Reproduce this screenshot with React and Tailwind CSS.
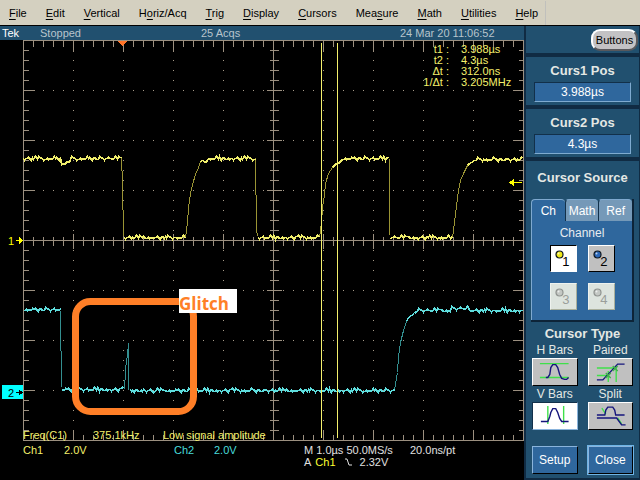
import React, { useState } from 'react';
import { clsx } from 'clsx';

const MENU = [
  ['', 'F', 'ile'],
  ['', 'E', 'dit'],
  ['', 'V', 'ertical'],
  ['H', 'o', 'riz/Acq'],
  ['', 'T', 'rig'],
  ['', 'D', 'isplay'],
  ['', 'C', 'ursors'],
  ['Mea', 's', 'ure'],
  ['', 'M', 'ath'],
  ['', 'U', 'tilities'],
  ['', 'H', 'elp'],
];

const READOUTS = [
  ['t1 :', '3.988µs'],
  ['t2 :', '4.3µs'],
  ['Δt :', '312.0ns'],
  ['1/Δt :', '3.205MHz'],
];

// graticule: 10 x 8 divisions of 50 units, origin at (23, 40)
const LEFT = 23;
const TOP = 40;
const RIGHT = 523;
const BOTTOM = 440;
const MID_X = 273;
const MID_Y = 240;

const NOISE = [0, 1, -1, 0, 1, 1, -1, 0, -2, 0, 1, -1, 1, 0, -1, 2, 0, 0, -1, 1, 0, -1, 1, 2, 0, -1, 0, 1, -2];

const flat = (from, to, y, seed) => {
  const points = [];
  for (let x = from; x <= to; x += 1) {
    points.push(`${x},${y + NOISE[(x * 3 + seed * 7 + Math.floor(x / 11)) % NOISE.length]}`);
  }
  return points.join(' ');
};

const CH1_BRIGHT = [
  flat(23, 60, 158, 1) + ' 61,164 62,163 64,164 67,161 69,162 ' + flat(70, 121, 158, 3),
  flat(123, 185, 237, 2),
  '200,161 202,160 205,162 207,160 ' + flat(208, 255, 158, 4),
  flat(257, 319, 237, 5),
  '332,167 334,165 336,163 338,163 340,161 ' + flat(342, 388, 158, 2),
  flat(390, 452, 237, 1),
  '467,165 469,163 471,162 474,160 ' + flat(476, 522, 159, 6),
];

const CH1_DIM = [
  '121,158 122,182 123,236',
  '185,237 187,222 188,207 190,193 192,184 195,174 198,167 200,161',
  '255,158 256,229 257,236',
  '319,237 321,222 322,207 324,194 325,183 328,173 332,167',
  '389,158 389,234',
  '452,237 454,222 456,206 458,190 460,180 464,171 467,165',
];

const CH2_BRIGHT = [
  flat(23, 60, 309, 2),
  flat(62, 123, 389, 4),
  flat(130, 394, 390, 1),
  '406,321 408,317 411,315 414,313 ' + flat(416, 450, 310, 3) + ' ' + flat(451, 468, 308, 5) + ' ' + flat(469, 522, 310, 2),
];

const CH2_DIM = [
  '60,311 61,387',
  '124,389 125,370 126,360 127,355 128,343 128,389',
  '394,390 397,372 398,356 400,342 403,330 406,321',
];

const Graticule = () => {
  const lines = [];
  const dots = [];
  for (let x = LEFT + 10; x < RIGHT; x += 10) {
    const big = (x - LEFT) % 50 === 0;
    lines.push(`M${x} ${TOP}v${big ? 11 : 6}`);
    lines.push(`M${x} ${BOTTOM}v${big ? -11 : -6}`);
    lines.push(big ? `M${x} ${MID_Y - 7}v15` : `M${x} ${MID_Y - 4}v9`);
  }
  for (let y = TOP + 10; y < BOTTOM; y += 10) {
    const big = (y - TOP) % 50 === 0;
    lines.push(`M${LEFT} ${y}h${big ? 11 : 5}`);
    lines.push(`M${RIGHT} ${y}h${big ? -11 : -5}`);
    lines.push(big ? `M${MID_X - 7} ${y}h15` : `M${MID_X - 4} ${y}h9`);
  }
  for (let x = LEFT + 10; x < RIGHT; x += 10) {
    for (let y = TOP + 10; y < BOTTOM; y += 10) {
      if ((x - LEFT) % 50 === 0 || (y - TOP) % 50 === 0) dots.push(`M${x} ${y}h1v1h-1z`);
    }
  }
  return (
    <>
      <path d={dots.join('')} fill="#a89c8a" />
      <g fill="none" stroke="#9c9080" strokeWidth="1">
        <path d={lines.join('')} transform="translate(.5 .5)" />
        <path d={`M${LEFT}.5 ${TOP}.5H${RIGHT}.5V${BOTTOM}.5H${LEFT}.5z`} />
        <path d={`M${LEFT} ${MID_Y}.5H${RIGHT}M${MID_X}.5 ${TOP}V${BOTTOM}`} />
      </g>
    </>
  );
};

const Trace = ({ lines, color, width = 1 }) => (
  <g fill="none" stroke={color} strokeWidth={width}>
    {lines.map((points, i) => (
      <polyline key={i} points={points} transform="translate(.5 .5)" />
    ))}
  </g>
);

const Plot = () => (
  <svg viewBox="0 40 524 402" className="block w-full h-auto" shapeRendering="crispEdges" role="img" aria-label="Channel 1 and channel 2 waveforms">
    <Graticule />
    <Trace lines={CH1_DIM} color="#9a9434" />
    <Trace lines={CH1_BRIGHT} color="#f0ee6c" width={1.5} />
    <Trace lines={CH2_DIM} color="#338f90" />
    <Trace lines={CH2_BRIGHT} color="#5fdede" width={1.5} />

    {/* cursors */}
    <path d="M321.5 43V438M337.5 43V438" stroke="#f4f06c" />

    {/* trigger position and level */}
    <path d="M118 41h9l-4.500 4z" fill="#ff7428" stroke="#ff7428" />
    <path d="M513 182.500h9" stroke="#ffff00" />
    <path d="M509 182.500l5-4v8z" fill="#ffff00" />

    {/* channel markers */}
    <path d="M16 240.500h4" stroke="#ffff00" />
    <path d="M19 237l4 3.500-4 3.500z" fill="#ffff00" />
    <rect x="2" y="385" width="21" height="14" fill="#00ffff" />
    <path d="M16 392.500h4" stroke="#000" />
    <path d="M19 389.500l4 3-4 3z" fill="#000" />

    <rect x="75.500" y="301.500" width="118" height="110" rx="15" fill="none" stroke="#ff7f27" strokeWidth="7" shapeRendering="auto" />
  </svg>
);

const Section = ({ label, id, value }) => (
  <div className="flex flex-col items-center border-b-4 border-[#102b43] px-2 pt-[5px] h-[52px]">
    <label htmlFor={id} className="text-[13px] leading-[18px] font-bold text-[#e4e8e4]">{label}</label>
    <input
      id={id}
      defaultValue={value}
      className="mt-[2px] h-5 w-full border border-t-[#12304a] border-l-[#12304a] border-b-[#7fabd0] border-r-[#7fabd0] bg-[#2f679d] text-center text-[12px] text-white outline-none"
    />
  </div>
);

const ChannelButton = ({ n, active, disabled, color, onClick }) => (
  <button
    type="button"
    disabled={disabled}
    aria-pressed={active}
    onClick={onClick}
    className={clsx(
      'relative h-[27px] w-[27px] border',
      active && 'bg-white border-t-black border-l-black border-b-white border-r-white text-black',
      !active && !disabled && 'bg-[#c0c0c0] border-t-white border-l-white border-b-black border-r-black text-black',
      disabled && 'bg-[#dde4de] border-t-[#eef2ee] border-l-[#eef2ee] border-b-[#aab09c] border-r-[#aab09c] text-[#9a9e9a]'
    )}
  >
    <svg viewBox="0 0 9 9" className="absolute left-1 top-1 h-[9px] w-[9px]" aria-hidden="true">
      <circle cx="4.500" cy="4.500" r="3.500" fill={color} stroke={disabled ? '#909490' : '#101820'} strokeWidth="1.200" />
      <circle cx="3.500" cy="3.500" r="1" fill="#fff" opacity=".7" />
    </svg>
    <span className="absolute bottom-0 right-[6px] text-[13px] leading-[18px]">{n}</span>
  </button>
);

const TYPES = [
  {
    name: 'H Bars',
    icon: (
      <>
        <path d="M7 4.500h29M7 18.500h29" stroke="#3fe04a" />
        <path d="M13 18.500h2l2-3 1-7 2-3h3l2 3 2 7 2 4 3 1h2l2-2" stroke="#15157c" />
      </>
    ),
  },
  {
    name: 'Paired',
    icon: (
      <>
        <path d="M8 9h18M8 16.500h12M19.500 12v11M27.500 7v16" stroke="#3fe04a" />
        <path d="M8 21h6l15-16h7" stroke="#15157c" />
        <path d="M24 7l5 5M24 12l5-5M17 14l5 5M17 19l5-5" stroke="#3fb04a" />
      </>
    ),
  },
  {
    name: 'V Bars',
    icon: (
      <>
        <path d="M15 3v18M31 3v18" stroke="#3fe04a" />
        <path d="M8 18.500h7l2-5 1-4 2-4h3l2 4 2 6 2 3h7" stroke="#15157c" />
      </>
    ),
  },
  {
    name: 'Split',
    icon: (
      <>
        <path d="M13 5l4 6M29 15l4 6" stroke="#3fe04a" />
        <path d="M8 12h8l1-5 2-3h5l2 3 1 5h9" stroke="#15157c" />
        <path d="M8 15h20l5 7h4" stroke="#15157c" />
      </>
    ),
  },
];

const CursorTypes = () => {
  const [type, setType] = useState('V Bars');
  return (
    <div className="grid grid-cols-2 gap-x-[10px] px-[6px]">
      {TYPES.map(({ name, icon }) => (
        <label key={name} className="flex flex-col items-center text-[12px] leading-4 text-[#e4e8e4]">
          {name}
          <button
            type="button"
            aria-label={name}
            aria-pressed={type === name}
            onClick={() => setType(name)}
            className={clsx(
              'h-7 w-full border',
              type === name
                ? 'bg-white border-t-[#12304a] border-l-[#12304a] border-b-[#8ab4dc] border-r-[#8ab4dc]'
                : 'bg-[#c0c0c0] border-t-white border-l-white border-b-black border-r-black'
            )}
          >
            <svg viewBox="0 0 44 26" className="h-full w-full" fill="none" strokeWidth="1.400" aria-hidden="true">
              {icon}
            </svg>
          </button>
        </label>
      ))}
    </div>
  );
};

const TABS = ['Ch', 'Math', 'Ref'];

const CursorSource = () => {
  const [tab, setTab] = useState('Ch');
  const [channel, setChannel] = useState(1);
  return (
    <div className="mx-[5px] border-r-2 border-b-2 border-[#0d2438]">
      <div role="tablist" className="grid grid-cols-3">
        {TABS.map((name) => (
          <button
            key={name}
            type="button"
            role="tab"
            aria-selected={tab === name}
            onClick={() => setTab(name)}
            className={clsx(
              'h-[22px] rounded-t-[4px] border-t border-l border-[#7fa9cf] text-[12px] text-white',
              tab === name ? 'bg-[#2f679d]' : 'bg-[#7599b8] border-l-[#12304a]'
            )}
          >
            {name}
          </button>
        ))}
      </div>
      <div role="tabpanel" className="border-l border-[#7fa9cf] bg-[#2f679d] pt-1 pb-[10px]">
        <div className="text-center text-[12px] leading-4 text-[#e8ecf0]">Channel</div>
        <div className="mt-1 grid grid-cols-2 gap-y-[11px] gap-x-[11px] w-[65px] mx-auto">
          <ChannelButton n={1} active={channel === 1} color="#f0e818" onClick={() => setChannel(1)} />
          <ChannelButton n={2} active={channel === 2} color="#2c68b8" onClick={() => setChannel(2)} />
          <ChannelButton n={3} disabled color="#c4c8c4" />
          <ChannelButton n={4} disabled color="#c4c8c4" />
        </div>
      </div>
    </div>
  );
};

const SidePanel = () => (
  <aside className="flex w-[116px] shrink-0 flex-col border-l-2 border-r border-b-2 border-[#102b43] bg-[#21506f]">
    <div className="flex h-[31px] shrink-0 items-start justify-end border-b-4 border-[#102b43] pt-[3px] pr-[1px]">
      <button type="button" className="h-[22px] w-[47px] rounded-[9px] border-2 border-t-white border-l-white border-b-[#58585c] border-r-[#58585c] bg-[#c3c2c4] text-[11px] leading-4 text-black">
        Buttons
      </button>
    </div>
    <Section id="curs1" label="Curs1 Pos" value="3.988µs" />
    <Section id="curs2" label="Curs2 Pos" value="4.3µs" />
    <h2 className="pt-2 pb-3 text-center text-[13px] leading-[18px] font-bold text-[#e4e8e4]">Cursor Source</h2>
    <CursorSource />
    <h2 className="pt-1 text-center text-[13px] leading-4 font-bold text-[#e4e8e4]">Cursor Type</h2>
    <CursorTypes />
    <div className="mt-auto mb-1 grid grid-cols-2 gap-x-[10px] px-[6px]">
      <button type="button" className="h-7 self-center border border-t-[#8ab4dc] border-l-[#8ab4dc] border-b-black border-r-black bg-[#2f679d] text-[12px] text-white">Setup</button>
      <button type="button" className="h-7 self-center border border-t-[#8ab4dc] border-l-[#8ab4dc] border-b-black border-r-black bg-[#2f679d] text-[12px] text-white outline outline-[#6fb4e4]">Close</button>
    </div>
  </aside>
);

const App = () => (
  <div className="flex min-h-screen flex-col bg-black font-['Liberation_Sans',sans-serif] text-[11px]">
    <nav className="flex h-[26px] items-center gap-[19px] border-b border-black bg-[#d4d0c0] pl-[9px] text-[11px] text-black">
      {MENU.map(([before, key, after]) => (
        <button key={before + key + after} type="button" className="leading-4">
          {before}<span className="underline underline-offset-2">{key}</span>{after}
        </button>
      ))}
      <span className="-ml-3 h-6 border-l border-[#c0c0bc]" />
    </nav>

    <div className="flex flex-1">
      <main className="flex min-w-0 flex-1 flex-col">
        <header className="grid h-[14px] grid-cols-[38px_161px_1fr_124px] bg-[#21506f] pl-[2px] leading-[14px] text-[#b8c4cc]">
          <span className="text-white">Tek</span>
          <span>Stopped</span>
          <span>25 Acqs</span>
          <span>24 Mar 20 11:06:52</span>
        </header>

        <section className="relative">
          <Plot />
          <dl className="absolute right-[13px] top-1 grid grid-cols-[auto_50px] gap-x-3 text-[11px] leading-[11px] text-[#f4f06c]">
            {READOUTS.map(([name, value]) => (
              <React.Fragment key={name}>
                <dt className="text-right">{name}</dt>
                <dd>{value}</dd>
              </React.Fragment>
            ))}
          </dl>
          <span className="absolute left-2 top-[194px] leading-[14px] text-[#ffff00]">1</span>
          <span className="absolute left-2 top-[346px] leading-[14px] text-black">2</span>
          <span className="absolute left-[179px] top-[249px] h-6 w-[58px] bg-white pt-[5px] font-['Open_Sans',sans-serif] text-[17px] leading-5 font-bold text-[#ff7f27]">
            Glitch
          </span>
          <div className="absolute bottom-0 left-[23px] grid grid-cols-[70px_70px_auto] leading-[14px] text-[#f4f06c]">
            <span>Freq(C1)</span>
            <span>375.1kHz</span>
            <span>Low signal amplitude</span>
          </div>
        </section>

        <footer className="grid grid-cols-[41px_110px_40px_90px_106px_1fr] pl-[23px] pt-[2px] leading-3 text-[#e0e0e0]">
          <span className="text-[#f4f06c]">Ch1</span>
          <span className="text-[#f4f06c]">2.0V</span>
          <span className="text-[#48dcdc]">Ch2</span>
          <span className="text-[#48dcdc]">2.0V</span>
          <span className="whitespace-nowrap">M 1.0µs 50.0MS/s</span>
          <span>20.0ns/pt</span>
          <span className="col-start-5 flex items-center gap-1">
            A <b className="font-normal text-[#ffff30]">Ch1</b>
            <svg viewBox="0 0 8 8" className="mx-1 h-2 w-2" fill="none" stroke="currentColor" aria-label="falling edge">
              <path d="M1 1h2l2 6h3" />
            </svg>
            2.32V
          </span>
        </footer>
      </main>
      <SidePanel />
    </div>
  </div>
);

export default App;
